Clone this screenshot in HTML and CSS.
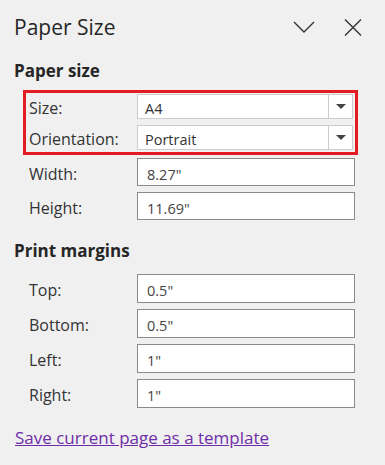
FILE: index.html
```html
<!DOCTYPE html>
<html lang="en">
<head>
  <meta charset="UTF-8">
  <meta name="viewport" content="width=device-width, initial-scale=1.0">
  <title>Paper Size</title>
  <link rel="stylesheet" href="styles.css">
</head>
<body>
  <div class="pane">
    <div class="pane-header">
      <h1 class="pane-title">Paper Size</h1>
      <div class="pane-actions">
        <button class="icon-button" title="Task pane options">
          <svg width="22" height="12" viewBox="0 0 22 12"><path d="M1 1 L11 11 L21 1" fill="none" stroke="#333" stroke-width="1.4"/></svg>
        </button>
        <button class="icon-button" title="Close">
          <svg width="18" height="17" viewBox="0 0 18 17"><path d="M1 0.5 L17 16.5 M17 0.5 L1 16.5" fill="none" stroke="#333" stroke-width="1.4"/></svg>
        </button>
      </div>
    </div>

    <h2 class="group-title">Paper size</h2>
    <div class="fields highlighted">
      <label class="field-label">Size:</label>
      <div class="dropdown">
        <span class="dropdown-value">A4</span>
        <span class="dropdown-arrow"></span>
      </div>
      <label class="field-label">Orientation:</label>
      <div class="dropdown">
        <span class="dropdown-value">Portrait</span>
        <span class="dropdown-arrow"></span>
      </div>
    </div>
    <div class="fields sizes">
      <label class="field-label">Width:</label>
      <input class="text-field" type="text" value='8.27"'>
      <label class="field-label">Height:</label>
      <input class="text-field" type="text" value='11.69"'>
    </div>

    <h2 class="group-title margins-title">Print margins</h2>
    <div class="fields margins">
      <label class="field-label">Top:</label>
      <input class="text-field" type="text" value='0.5"'>
      <label class="field-label">Bottom:</label>
      <input class="text-field" type="text" value='0.5"'>
      <label class="field-label">Left:</label>
      <input class="text-field" type="text" value='1"'>
      <label class="field-label">Right:</label>
      <input class="text-field" type="text" value='1"'>
    </div>

    <a class="template-link" href="#">Save current page as a template</a>
  </div>
</body>
</html>
```

FILE: styles.css
```css
body {
  margin: 0;
  background-color: #f0f0f0;
  font-family: 'Open Sans', 'Noto Sans', sans-serif;
  color: #333;
}

.pane {
  padding: 13px 0 0 14px;
}

.pane-header {
  display: flex;
  align-items: center;
  justify-content: space-between;
  height: 28px;
}

.pane-title {
  margin: 0;
  font-size: 21px;
  line-height: 28px;
  font-weight: normal;
  color: #262626;
}

.pane-actions {
  display: flex;
  align-items: center;
  gap: 29px;
  margin-right: 23px;
}

.icon-button {
  background: none;
  border: none;
  padding: 0;
  display: flex;
  cursor: pointer;
}

.group-title {
  margin: 19px 0 0;
  font-size: 17px;
  line-height: 22px;
  font-weight: bold;
  color: #262626;
}

.fields {
  display: grid;
  grid-template-columns: 108px 218px;
  grid-auto-rows: 28px;
  row-gap: 6px;
  align-items: center;
  margin-left: 15px;
}

.field-label {
  font-size: 16px;
  padding-top: 3px;
}

.highlighted {
  grid-template-columns: 108px 216px;
  grid-auto-rows: 25px;
  margin: 8px 0 0 9px;
  padding: 1px 1px 2px 3px;
  border: 3px solid #e31b23;
  width: 325px;
}

.sizes {
  margin-top: 3px;
}

.margins-title {
  margin-top: 20px;
}

.margins {
  grid-auto-rows: 29px;
  margin-top: 12px;
}

.dropdown {
  display: flex;
  height: 25px;
  box-sizing: border-box;
  background-color: #fff;
  border: 1px solid #cdcdcd;
}

.dropdown-value {
  flex: 1;
  font-size: 14.5px;
  line-height: 24px;
  padding: 2px 0 0 7px;
  color: #333;
}

.dropdown-arrow {
  width: 23px;
  border-left: 1px solid #cdcdcd;
  display: flex;
  align-items: center;
  justify-content: center;
}

.dropdown-arrow::after {
  content: '';
  border-left: 5px solid transparent;
  border-right: 5px solid transparent;
  border-top: 5px solid #444;
}

.text-field {
  height: 100%;
  width: 100%;
  box-sizing: border-box;
  margin: 0;
  padding: 4px 9px 0;
  border: 1px solid #8a8a8a;
  background-color: #fff;
  font-family: 'Open Sans', 'Noto Sans', sans-serif;
  font-size: 14.5px;
  color: #444;
  outline: none;
}

.template-link {
  display: inline-block;
  margin-top: 19px;
  margin-left: 1px;
  font-size: 17px;
  line-height: 22px;
  color: #6f2da8;
  text-decoration: underline;
}
```
